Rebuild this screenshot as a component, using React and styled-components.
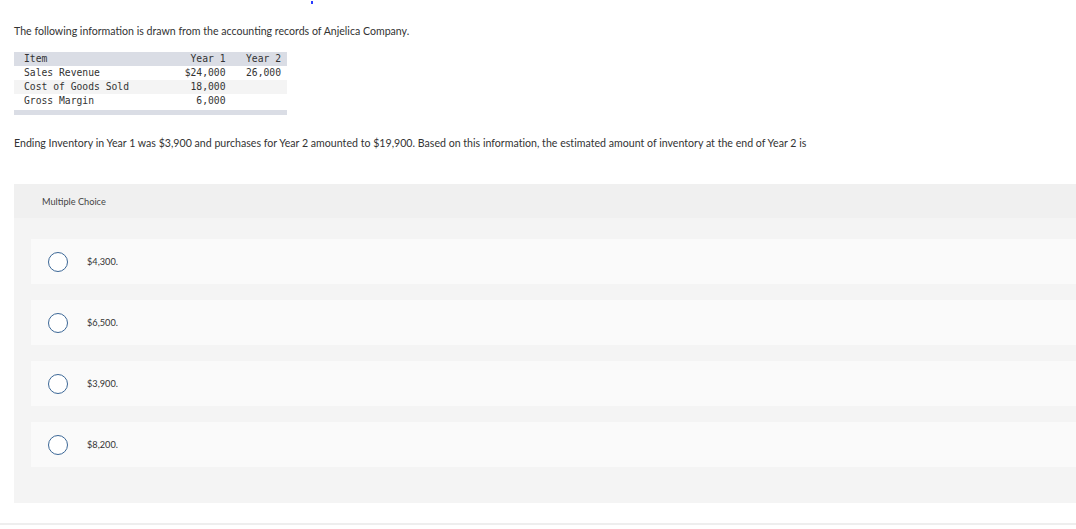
import React from "react";
import styled, { createGlobalStyle } from "styled-components";

const Global = createGlobalStyle`
  html, body { margin: 0; padding: 0; background: #fff; overflow: hidden; }
  body { font-family: Lato, "Open Sans", sans-serif; color: #333; }
`;

const Page = styled.div`
  position: relative;
  width: 1076px;
  height: 529px;
  padding: 24px 0 0 14px;
  box-sizing: border-box;
  overflow: hidden;
`;

const Dot = styled.span`
  position: absolute;
  left: 311px;
  top: 1px;
  width: 2px;
  height: 3px;
  background: #2a3cff;
`;

const Para = styled.p`
  margin: 0;
  font-size: 10.6px;
  line-height: 14px;
  color: #333;
  letter-spacing: 0;
`;

const Table = styled.table`
  margin-top: 14px;
  border-collapse: collapse;
  width: 273px;
  font-family: "DejaVu Sans Mono", monospace;
  font-size: 9.7px;
  color: #333;
  border-bottom: 5px solid #dadde5;
`;

const Row = styled.tr`
  height: 14px;
  background: ${(p) => (p.$head ? "#dadde5" : p.$alt ? "#f4f4f4" : "#fff")};
`;

const Cell = styled.td`
  padding: 0 ${(p) => (p.$num ? "6px" : "0")} 0 ${(p) => (p.$num ? "0" : "10px")};
  text-align: ${(p) => (p.$num ? "right" : "left")};
  width: ${(p) => p.$w}px;
  line-height: 14px;
  white-space: nowrap;
  vertical-align: middle;
`;

const Spacer = styled.tr`
  height: 4px;
  background: #fff;
`;

const Question = styled(Para)`
  margin-top: 21px;
  letter-spacing: 0.01px;
`;

const Panel = styled.section`
  margin-top: 34px;
  margin-right: -40px;
  background: #f4f4f4;
  padding-bottom: 36px;
`;

const PanelHead = styled.div`
  height: 34px;
  background: #f0f0f0;
  display: flex;
  align-items: center;
  padding-left: 28px;
  font-size: 9.2px;
  color: #444;
`;

const Options = styled.div`
  display: flex;
  flex-direction: column;
  gap: 16px;
  padding: 21px 0 0 17px;
`;

const Option = styled.label`
  height: 45px;
  background: #fafafa;
  display: flex;
  align-items: center;
  padding-left: 17px;
  gap: 19px;
  font-size: 9.2px;
  color: #333;
`;

const Radio = styled.span`
  width: 20px;
  height: 20px;
  border-radius: 50%;
  border: 1.5px solid #3b6796;
  box-sizing: border-box;
  background: #fff;
  flex: none;
`;

const BottomLine = styled.div`
  margin: 20px 0 0 -14px;
  height: 2px;
  background: #eeeeee;
`;

const rows = [
  ["Sales Revenue", "$24,000", "26,000"],
  ["Cost of Goods Sold", "18,000", ""],
  ["Gross Margin", "6,000", ""],
];

const choices = ["$4,300.", "$6,500.", "$3,900.", "$8,200."];

export default function App() {
  return (
    <>
      <Global />
      <Page>
        <Dot />
        <Para>The following information is drawn from the accounting records of Anjelica Company.</Para>
        <Table>
          <tbody>
            <Row $head>
              <Cell $w={155}>Item</Cell>
              <Cell $w={64} $num>Year 1</Cell>
              <Cell $w={54} $num>Year 2</Cell>
            </Row>
            {rows.map((r, i) => (
              <Row key={r[0]} $alt={i === 1}>
                <Cell $w={155}>{r[0]}</Cell>
                <Cell $w={64} $num>{r[1]}</Cell>
                <Cell $w={54} $num>{r[2]}</Cell>
              </Row>
            ))}
            <Spacer>
              <td colSpan={3} />
            </Spacer>
          </tbody>
        </Table>
        <Question>
          Ending Inventory in Year 1 was $3,900 and purchases for Year 2 amounted to $19,900. Based on this information, the estimated amount of inventory at the end of Year 2 is
        </Question>
        <Panel>
          <PanelHead>Multiple Choice</PanelHead>
          <Options>
            {choices.map((c) => (
              <Option key={c}>
                <Radio />
                <span>{c}</span>
              </Option>
            ))}
          </Options>
        </Panel>
        <BottomLine />
      </Page>
    </>
  );
}
